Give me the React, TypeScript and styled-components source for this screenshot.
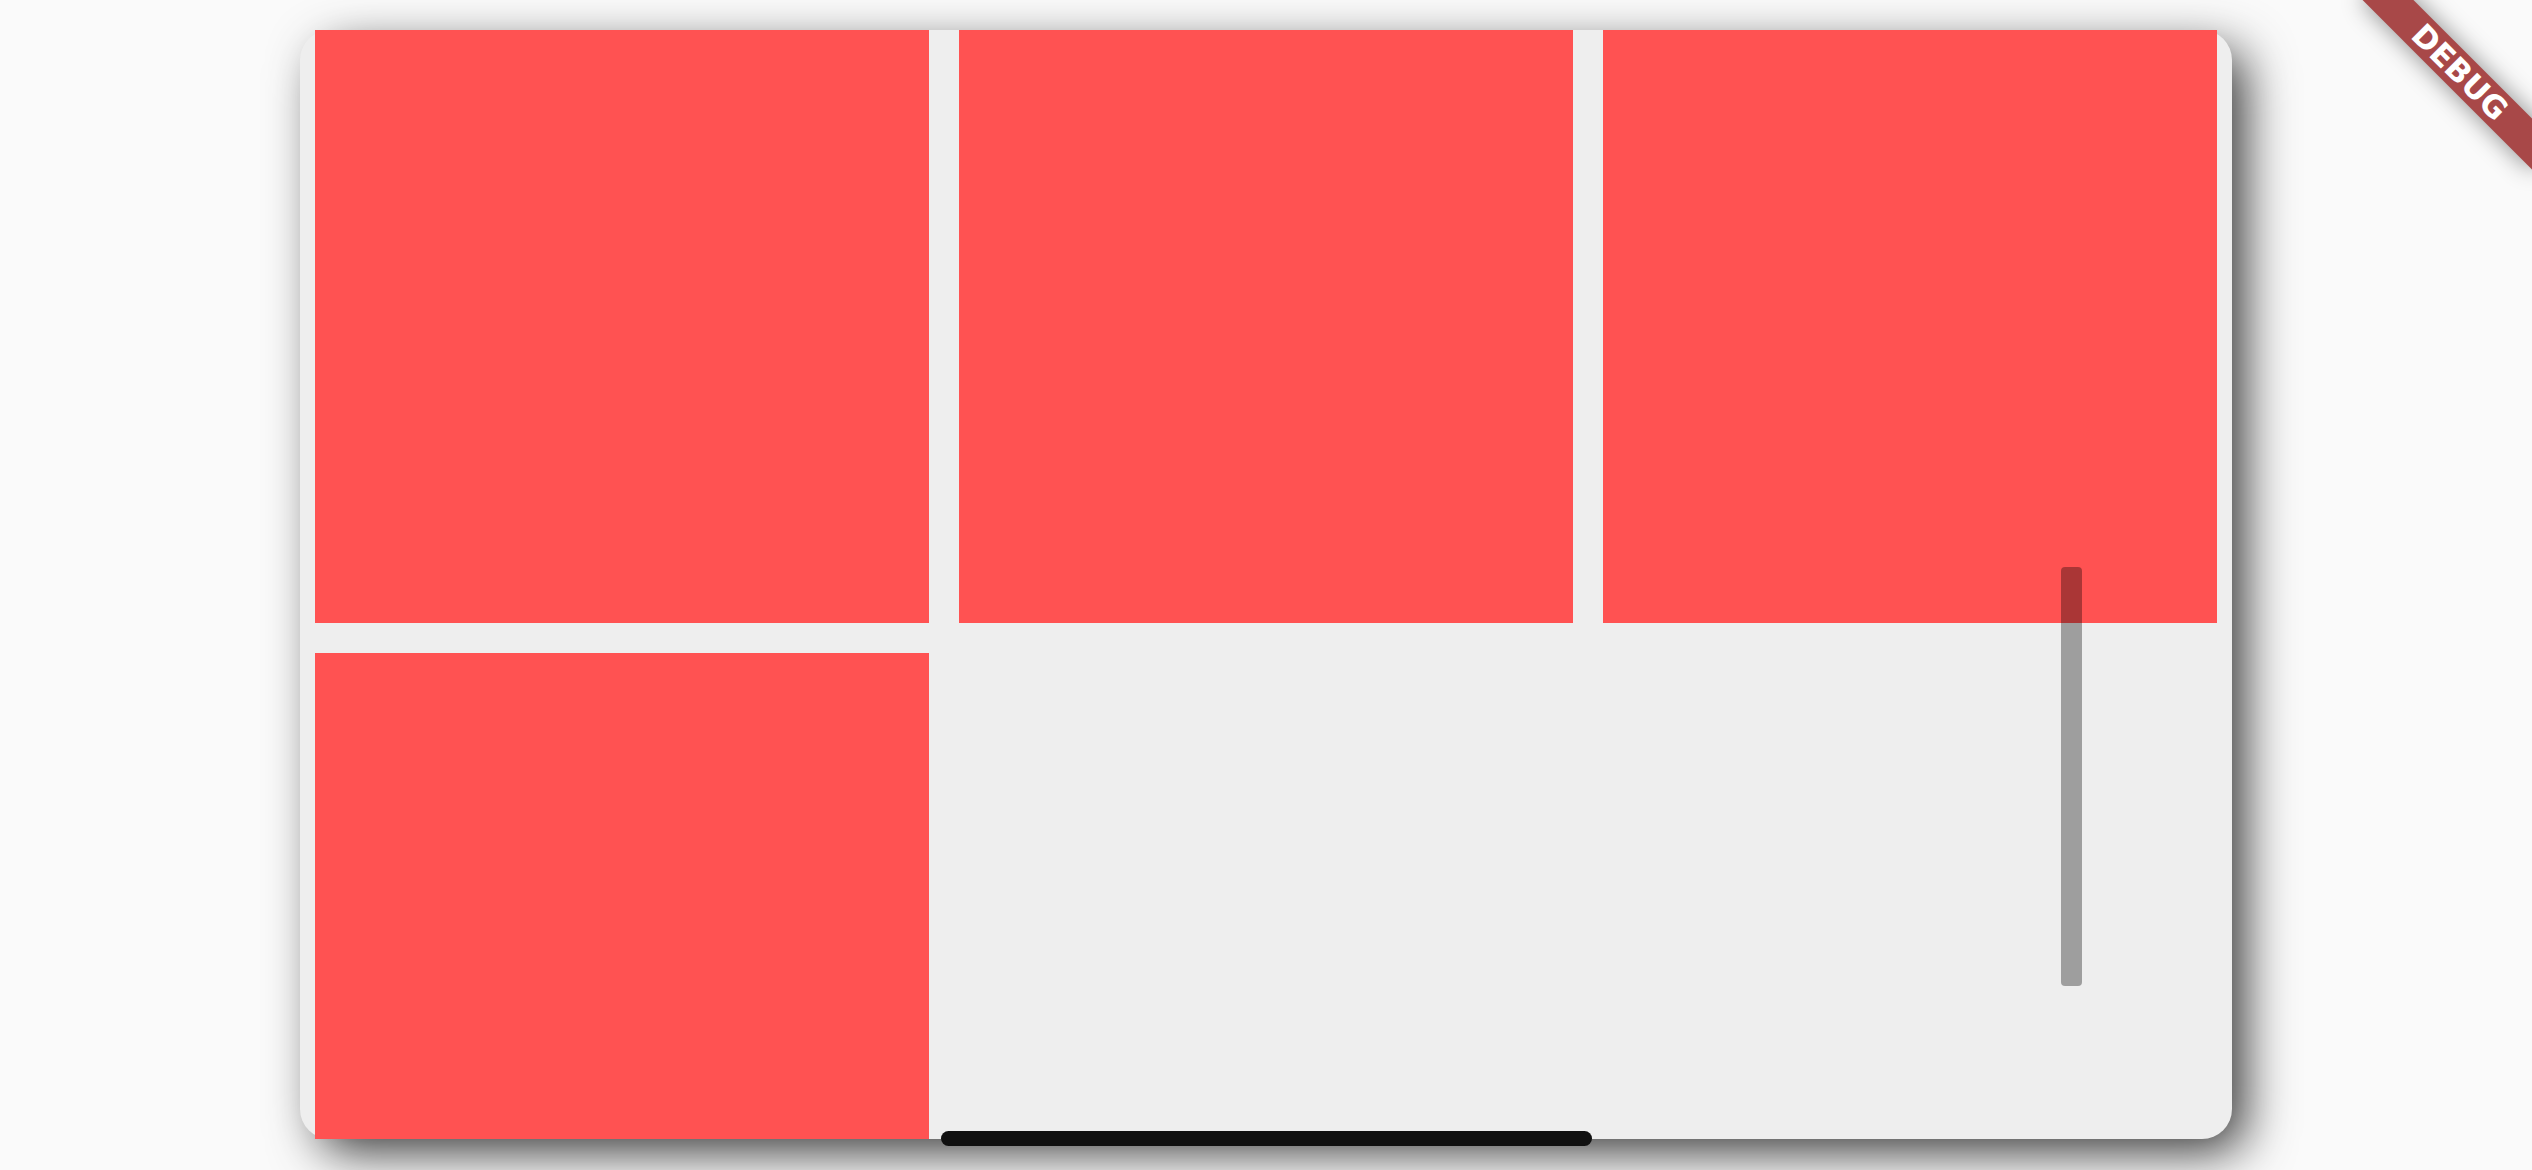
import React from 'react'
import styled, { createGlobalStyle } from 'styled-components'

const GlobalStyle = createGlobalStyle`
  html, body {
    margin: 0;
    padding: 0;
    background: #fafafa;
    overflow: hidden;
  }
`

const tiles = [1, 2, 3, 4]

const Stage = styled.div`
  position: relative;
  width: 2532px;
  height: 1170px;
  overflow: hidden;
  padding: 30px 0 0 300px;
  box-sizing: border-box;
  background: #fafafa;
`

const Device = styled.div`
  position: relative;
  width: 1932px;
  height: 1109px;
  border-radius: 30px;
  background: #eeeeee;
  box-shadow: 16px 16px 50px -4px rgba(0, 0, 0, 0.8);
`

const Viewport = styled.div`
  width: 100%;
  height: 100%;
  overflow: hidden;
  padding: 0 15px;
  box-sizing: border-box;
`

const Grid = styled.div`
  display: grid;
  grid-template-columns: repeat(3, 614px);
  grid-auto-rows: 593px;
  gap: 30px;
`

const Tile = styled.div`
  background: #ff5252;
`

const ScrollThumb = styled.div`
  position: absolute;
  left: 1761px;
  top: 537px;
  width: 21px;
  height: 419px;
  border-radius: 4px;
  background: rgba(0, 0, 0, 0.335);
`

const HomeIndicator = styled.div`
  position: absolute;
  left: 641px;
  bottom: -7px;
  width: 651px;
  height: 15px;
  border-radius: 8px;
  background: #111111;
`

const DebugBanner = styled.div`
  position: absolute;
  left: 2340px;
  top: 54px;
  width: 240px;
  height: 36px;
  transform: rotate(45deg);
  background: #a84848;
  box-shadow: 0 0 24px rgba(0, 0, 0, 0.45);
  color: #ffffff;
  font-family: 'DejaVu Sans', 'Roboto', sans-serif;
  font-weight: 900;
  font-size: 31px;
  line-height: 36px;
  text-align: center;
`

export default function App() {
  return (
    <>
      <GlobalStyle />
      <Stage>
        <Device>
          <Viewport>
            <Grid>
              {tiles.map((t) => (
                <Tile key={t} />
              ))}
            </Grid>
          </Viewport>
          <ScrollThumb />
          <HomeIndicator />
        </Device>
        <DebugBanner>DEBUG</DebugBanner>
      </Stage>
    </>
  )
}
